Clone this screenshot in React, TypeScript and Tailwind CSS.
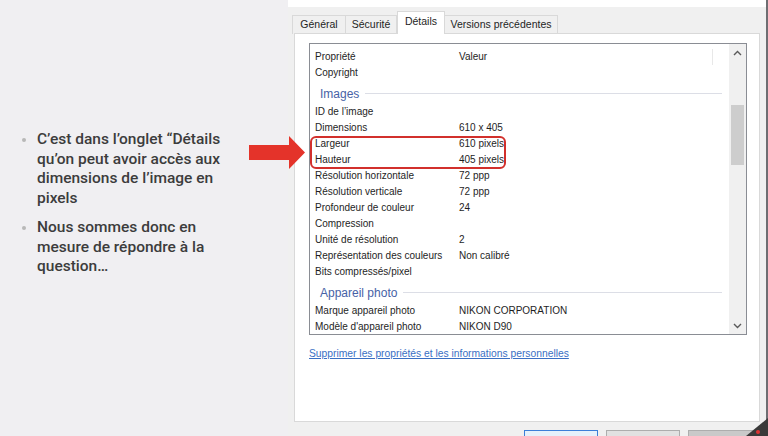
import React from "react";

const rows: { label: string; value?: string; group?: boolean }[] = [
  { label: "Copyright" },
  { label: "Images", group: true },
  { label: "ID de l’image" },
  { label: "Dimensions", value: "610 x 405" },
  { label: "Largeur", value: "610 pixels" },
  { label: "Hauteur", value: "405 pixels" },
  { label: "Résolution horizontale", value: "72 ppp" },
  { label: "Résolution verticale", value: "72 ppp" },
  { label: "Profondeur de couleur", value: "24" },
  { label: "Compression" },
  { label: "Unité de résolution", value: "2" },
  { label: "Représentation des couleurs", value: "Non calibré" },
  { label: "Bits compressés/pixel" },
  { label: "Appareil photo", group: true },
  { label: "Marque appareil photo", value: "NIKON CORPORATION" },
  { label: "Modèle d'appareil photo", value: "NIKON D90" },
];

function Chevron({ down }: { down?: boolean }) {
  return (
    <svg width="9" height="6" viewBox="0 0 9 6">
      <polyline
        points={down ? "1,1 4.5,4.5 8,1" : "1,5 4.5,1.5 8,5"}
        fill="none"
        stroke="#5a5a5a"
        strokeWidth="1.4"
      />
    </svg>
  );
}

function Bullet({ lines }: { lines: string[] }) {
  return (
    <div className="flex">
      <div className="w-[4px] h-[4px] rounded-full bg-[#b8b8b8] mt-[8px] shrink-0" />
      <p className="ml-[11px]">
        {lines.map((l, i) => (
          <span key={i} className="block whitespace-nowrap">
            {l}
          </span>
        ))}
      </p>
    </div>
  );
}

export default function App() {
  return (
    <div className="relative w-[768px] h-[436px] overflow-hidden flex bg-[#f0eff2]">
      {/* slide text */}
      <div
        className="w-[288px] shrink-0 pt-[130px] pl-[22px] text-[15.5px] leading-[19.7px] font-medium text-[#3c3c3c]"
        style={{ fontFamily: "Roboto, 'Liberation Sans', sans-serif" }}
      >
        <Bullet
          lines={[
            "C’est dans l’onglet “Détails",
            "qu’on peut avoir accès aux",
            "dimensions de l’image en",
            "pixels",
          ]}
        />
        <div className="mt-[9px]">
          <Bullet
            lines={["Nous sommes donc en", "mesure de répondre à la", "question…"]}
          />
        </div>
      </div>

      {/* properties dialog */}
      <div
        className="w-[480px] shrink-0 flex flex-col bg-[#f0f0f0] border-r-2 border-[#6e6e72] text-[10px] text-[#1e1e1e]"
        style={{ fontFamily: "'Liberation Sans', Arial, sans-serif" }}
      >
        <div className="h-[7px] shrink-0 bg-white" />
        <div className="h-[26px] shrink-0 pl-[4px] flex items-end relative z-10 text-[10.5px]">
          <div className="w-[54px] h-[19px] -mb-px flex items-center justify-center border border-b-0 border-[#d9d9d9]">
            Général
          </div>
          <div className="w-[51px] h-[19px] -mb-px flex items-center justify-center border border-l-0 border-b-0 border-[#d9d9d9]">
            Sécurité
          </div>
          <div className="w-[48px] h-[23px] -mb-px pb-[3px] flex items-center justify-center bg-white border border-b-0 border-[#d9d9d9]">
            Détails
          </div>
          <div className="w-[113px] h-[19px] -mb-px flex items-center justify-center border border-l-0 border-b-0 border-[#d9d9d9]">
            Versions précédentes
          </div>
        </div>

        <div className="ml-[6px] mr-[6px] h-[389px] shrink-0 bg-white border border-[#d9d9d9] pl-[14px] pt-[9px]">
          <div className="w-[438px] h-[292px] border border-[#8a8d94] flex">
            <div className="flex-1 pt-[4.5px] overflow-hidden">
              <div className="h-[16px] flex items-center">
                <div className="w-[149px] pl-[5px]">Propriété</div>
                <div className="w-[254px] h-[16px] flex items-center border-r border-[#e8e8e8]">
                  Valeur
                </div>
              </div>
              {rows.map((r) =>
                r.group ? (
                  <div key={r.label} className="h-[23px] flex items-center pt-[3px] pl-[10px] pr-[7px]">
                    <span className="text-[12px] text-[#4762a6]">{r.label}</span>
                    <div className="flex-1 h-px bg-[#dcdee6] ml-[6px]" />
                  </div>
                ) : (
                  <div key={r.label} className="h-[16px] flex items-center">
                    <div className="w-[149px] pl-[5px] whitespace-nowrap">{r.label}</div>
                    <div className="whitespace-nowrap">{r.value}</div>
                  </div>
                )
              )}
            </div>
            <div className="w-[17px] bg-[#f0f0f0] flex flex-col">
              <div className="h-[17px] flex items-center justify-center">
                <Chevron />
              </div>
              <div className="flex-1 px-[2px]">
                <div className="mt-[44px] h-[60px] bg-[#cdcdcd]" />
              </div>
              <div className="h-[17px] flex items-center justify-center">
                <Chevron down />
              </div>
            </div>
          </div>
          <div className="mt-[12px] leading-[14px] text-[10.3px] text-[#3a6fc4] underline whitespace-nowrap">
            Supprimer les propriétés et les informations personnelles
          </div>
        </div>

        <div className="mt-[8px] shrink-0 flex justify-end gap-[8px]">
          <div className="w-[74px] h-[23px] bg-[#e5f1fb] border border-[#3c7fd8]" />
          <div className="w-[74px] h-[23px] bg-[#e1e1e1] border border-[#adadad]" />
          <div className="w-[80px] h-[23px] bg-[#c9c9c9] border border-[#adadad] -mr-[2px]" />
        </div>
      </div>

      {/* annotation arrow */}
      <svg className="absolute left-[249px] top-[136px]" width="57" height="33" viewBox="0 0 57 33">
        <polygon points="0,9 40,9 40,0 56,16.5 40,33 40,24 0,24" fill="#e4332a" />
      </svg>
      {/* highlight box */}
      <div className="absolute left-[310px] top-[136px] w-[196px] h-[33px] border-2 border-[#d2302c] rounded-[6px]" />

      {/* corner watermark */}
      <svg className="absolute right-0 bottom-0" width="30" height="18" viewBox="0 0 30 18">
        <polygon points="30,0 30,18 8,18" fill="#3a3a3a" />
        <circle cx="20" cy="14" r="2" fill="#d33" />
      </svg>
    </div>
  );
}
